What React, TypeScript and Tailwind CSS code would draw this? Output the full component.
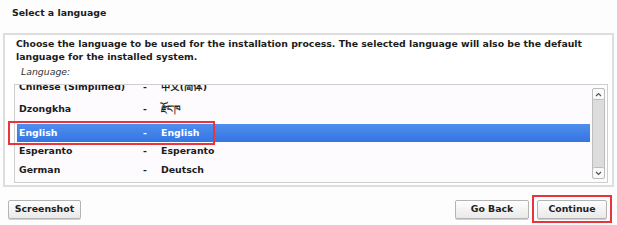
import React from "react";

const rows = [
  { name: "Chinese (Simplified)", native: "中文(简体)", h: "h-[22px]", pad: "pt-[1px]" },
  { name: "Dzongkha", native: "རྫོང་ཁ", h: "h-[26px]", pad: "pb-[3px]" },
  { name: "English", native: "English", h: "h-[18px]", pad: "", selected: true },
  { name: "Esperanto", native: "Esperanto", h: "h-[19px]", pad: "" },
  { name: "German", native: "Deutsch", h: "h-[18px]", pad: "" },
];

function Chevron({ up }: { up?: boolean }) {
  return (
    <svg width="7" height="5" viewBox="0 0 7 5" className="block">
      <path
        d={up ? "M1 4 L3.5 1.5 L6 4" : "M1 1 L3.5 3.5 L6 1"}
        fill="none"
        stroke="#555"
        strokeWidth="1.2"
      />
    </svg>
  );
}

function Button({ label, w }: { label: string; w: string }) {
  return (
    <button
      className={`${w} block h-[19px] rounded-[2px] border border-[#b4b4b4] bg-gradient-to-b from-[#fefefe] to-[#e9e9e9] text-[9.35px] font-bold leading-none text-[#222] shadow-[0_1px_0_#d0d0d0]`}
    >
      {label}
    </button>
  );
}

export default function App() {
  return (
    <div
      className="relative w-[617px] h-[225px] overflow-hidden bg-[#fdfdfd] text-[#1c1c1c]"
      style={{ fontFamily: '"DejaVu Sans", "Noto Sans CJK SC", sans-serif' }}
    >
      <div className="h-[33px] pl-[12px] pt-[6px] text-[9.35px] font-bold">Select a language</div>

      <div className="mx-[3px] h-[154px] border-2 border-[#dedede] bg-white pl-[11px] pr-[4px] pt-[3px]">
        <p className="text-[9.35px] font-bold leading-[12.5px]">
          Choose the language to be used for the installation process. The selected language will also be the default
          <br />
          language for the installed system.
        </p>
        <p className="mt-[3px] pl-[5px] text-[9.35px] italic leading-[12px] text-[#333]">Language:</p>

        <div className="mt-[6px] -ml-[2px] flex h-[99px] border border-[#cfcfcf] bg-[#fdfbfd]">
          <div className="flex-1 overflow-hidden pl-[2px] pr-[2px]">
            <div className="-mt-[9px] flex flex-col">
              {rows.map((r) => (
                <div
                  key={r.name}
                  className={`${r.h} ${r.pad} flex items-center text-[9.35px] font-bold ${
                    r.selected
                      ? "bg-gradient-to-b from-[#4f8ded] to-[#3475e3] text-white"
                      : ""
                  }`}
                >
                  <span className="w-[126px] pl-[2px]">{r.name}</span>
                  <span className="w-[18px]">-</span>
                  <span>{r.native}</span>
                </div>
              ))}
            </div>
          </div>
          <div className="my-[3px] mr-[2px] flex w-[13px] flex-col rounded-[2px] border border-[#bdbdbd] bg-[#dcdcdc]">
            <div className="flex h-[11px] items-center justify-center rounded-[2px] border-b border-[#bdbdbd] bg-[#fafafa]">
              <Chevron up />
            </div>
            <div className="flex-1" />
            <div className="flex h-[11px] items-center justify-center rounded-[2px] border-t border-[#bdbdbd] bg-[#fafafa]">
              <Chevron />
            </div>
          </div>
        </div>
      </div>

      <div className="mt-[8px] flex items-center pl-[8px] pr-[5px]">
        <Button label="Screenshot" w="w-[73px]" />
        <div className="flex-1" />
        <Button label="Go Back" w="w-[74px]" />
        <div className="ml-[3px] flex border-2 border-[#e8353c] px-[3px] py-[2.5px]">
          <Button label="Continue" w="w-[70px]" />
        </div>
      </div>

      {/* annotation around the selected row */}
      <div className="pointer-events-none absolute left-[8px] top-[121px] h-[24px] w-[207px] border-2 border-[#e8353c]" />
    </div>
  );
}
